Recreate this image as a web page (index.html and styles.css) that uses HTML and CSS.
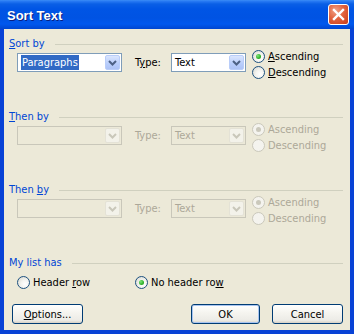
FILE: index.html
```html
<!DOCTYPE html>
<html lang="en">
<head>
  <meta charset="UTF-8" />
  <title>Sort Text</title>
  <link rel="stylesheet" href="styles.css">
</head>
<body>
  <div class="window">
    <div class="titlebar">
      <span class="title">Sort Text</span>
      <div class="close">
        <svg width="13" height="13" viewBox="0 0 13 13"><path d="M2 2 L11 11 M11 2 L2 11" stroke="#fff" stroke-width="2.4" stroke-linecap="square" fill="none"/></svg>
      </div>
    </div>

    <div class="content">
      <div class="group">
        <div class="group-head"><span class="group-label"><u>S</u>ort by</span><span class="rule"></span></div>
        <div class="row">
          <div class="select select-main">
            <span class="value"><span class="selected">Paragraphs</span></span>
            <span class="arrow"><svg width="9" height="6" viewBox="0 0 9 6"><path d="M1 1 L4.5 4.5 L8 1" stroke="currentColor" stroke-width="2" fill="none"/></svg></span>
          </div>
          <span class="type-label">T<u>y</u>pe:</span>
          <div class="select select-type">
            <span class="value">Text</span>
            <span class="arrow"><svg width="9" height="6" viewBox="0 0 9 6"><path d="M1 1 L4.5 4.5 L8 1" stroke="currentColor" stroke-width="2" fill="none"/></svg></span>
          </div>
          <div class="radios">
            <div class="option"><span class="radio"><span class="dot"></span></span><span><u>A</u>scending</span></div>
            <div class="option"><span class="radio"></span><span><u>D</u>escending</span></div>
          </div>
        </div>
      </div>

      <div class="group disabled">
        <div class="group-head"><span class="group-label"><u>T</u>hen by</span><span class="rule"></span></div>
        <div class="row">
          <div class="select select-main">
            <span class="value"></span>
            <span class="arrow"><svg width="9" height="6" viewBox="0 0 9 6"><path d="M1 1 L4.5 4.5 L8 1" stroke="currentColor" stroke-width="2" fill="none"/></svg></span>
          </div>
          <span class="type-label">Type:</span>
          <div class="select select-type">
            <span class="value">Text</span>
            <span class="arrow"><svg width="9" height="6" viewBox="0 0 9 6"><path d="M1 1 L4.5 4.5 L8 1" stroke="currentColor" stroke-width="2" fill="none"/></svg></span>
          </div>
          <div class="radios">
            <div class="option"><span class="radio"><span class="dot"></span></span><span>Ascending</span></div>
            <div class="option"><span class="radio"></span><span>Descending</span></div>
          </div>
        </div>
      </div>

      <div class="group disabled">
        <div class="group-head"><span class="group-label">Then <u>b</u>y</span><span class="rule"></span></div>
        <div class="row">
          <div class="select select-main">
            <span class="value"></span>
            <span class="arrow"><svg width="9" height="6" viewBox="0 0 9 6"><path d="M1 1 L4.5 4.5 L8 1" stroke="currentColor" stroke-width="2" fill="none"/></svg></span>
          </div>
          <span class="type-label">Type:</span>
          <div class="select select-type">
            <span class="value">Text</span>
            <span class="arrow"><svg width="9" height="6" viewBox="0 0 9 6"><path d="M1 1 L4.5 4.5 L8 1" stroke="currentColor" stroke-width="2" fill="none"/></svg></span>
          </div>
          <div class="radios">
            <div class="option"><span class="radio"><span class="dot"></span></span><span>Ascending</span></div>
            <div class="option"><span class="radio"></span><span>Descending</span></div>
          </div>
        </div>
      </div>

      <div class="list-group">
        <div class="group-head"><span class="group-label">My list has</span><span class="rule"></span></div>
        <div class="list-row">
          <div class="option header-opt"><span class="radio"></span><span>Header <u>r</u>ow</span></div>
          <div class="option"><span class="radio"><span class="dot"></span></span><span>No header ro<u>w</u></span></div>
        </div>
      </div>

      <div class="buttons">
        <button class="btn"><u>O</u>ptions...</button>
        <span class="spacer"></span>
        <button class="btn btn-ok">OK</button>
        <button class="btn btn-cancel">Cancel</button>
      </div>
    </div>
  </div>
</body>
</html>
```

FILE: styles.css
```css
* { box-sizing: border-box; }
body {
  margin: 0;
  width: 354px;
  height: 334px;
  overflow: hidden;
  font-family: "DejaVu Sans Condensed", "Liberation Sans", sans-serif;
  font-size: 11px;
  color: #000;
}
u { text-decoration-thickness: 1px; text-underline-offset: 1px; }
.window {
  width: 354px;
  height: 334px;
  display: flex;
  flex-direction: column;
  background: #0842d6;
}
.titlebar {
  height: 29px;
  flex: none;
  display: flex;
  align-items: center;
  padding: 2px 5px 0 7px;
  background: linear-gradient(to bottom, #3d8ff6 0, #2a7cf4 1px, #0a5fe6 4px, #0055e5 9px, #0053e3 18px, #0058ee 24px, #0046d0 29px);
}
.title {
  font-family: "Liberation Sans", sans-serif;
  font-weight: bold;
  font-size: 13px;
  color: #fff;
  text-shadow: 1px 1px 0 #0a1e80;
}
.close {
  margin-left: auto;
  width: 21px;
  height: 21px;
  border: 1px solid #fff;
  border-radius: 3px;
  background: radial-gradient(circle at 35% 30%, #f0a287 0, #e2643f 45%, #c83b17 100%);
  display: grid;
  place-items: center;
  margin-top: -2px;
}
.content {
  flex: 1;
  margin: 0 4px 4px 4px;
  background: #ece9d8;
  padding: 9px 7px 0 5px;
}
.group { margin-bottom: 31px; }
.group-head {
  display: flex;
  align-items: center;
  height: 12px;
  line-height: 12px;
}
.group-label { color: #0046d5; }
.rule {
  flex: 1;
  margin-left: 10px;
  border-top: 1px solid #d0d0bf;
}
.row {
  display: flex;
  align-items: flex-start;
}
.select {
  margin-top: 3px;
  height: 19px;
  border: 1px solid #7f9db9;
  background: #fff;
  display: flex;
  align-items: center;
  padding: 1px;
}
.select-main { width: 105px; margin-left: 8px; }
.select-type { width: 75px; }
.value {
  flex: 1;
  padding-left: 2px;
  line-height: 13px;
}
.selected {
  background: #316ac5;
  color: #fff;
  padding: 1px 1px;
}
.arrow {
  width: 15px;
  height: 15px;
  border-radius: 2px;
  border: 1px solid #b9cdf9;
  background: linear-gradient(to bottom, #dbe6fe, #b8cdfb 60%, #adc3f6);
  color: #4d6185;
  display: grid;
  place-items: center;
}
.type-label {
  width: 36px;
  margin-left: 13px;
  margin-top: 6px;
  line-height: 13px;
}
.radios {
  margin-left: 6px;
  margin-top: -2px;
}
.option {
  display: flex;
  align-items: center;
  gap: 3px;
  height: 16px;
}
.radio {
  width: 13px;
  height: 13px;
  border-radius: 50%;
  border: 1px solid #1c5180;
  background: radial-gradient(circle at 65% 65%, #ffffff 0, #f4f4f0 40%, #d4d4cb 100%);
  display: grid;
  place-items: center;
}
.dot {
  width: 5px;
  height: 5px;
  border-radius: 50%;
  background: radial-gradient(circle at 35% 35%, #7ee57a 0, #2eb12a 60%, #1e8a1b 100%);
}

.disabled .group-label { color: #0046d5; }
.disabled .type-label,
.disabled .option,
.disabled .value { color: #aca899; }
.disabled .select {
  border-color: #c9c7ba;
  background: #ece9d8;
}
.disabled .arrow {
  border-color: #e4e2d6;
  background: #f3f2ea;
  color: #c9c7ba;
}
.disabled .radio {
  border-color: #cac8bb;
  background: #f4f3ee;
}
.disabled .dot { background: #cac8bb; }

.list-group .group-head { margin-bottom: 5px; }
.list-row { display: flex; }
.header-opt { width: 118px; margin-left: 8px; }

.buttons {
  display: flex;
  margin: 14px 0 0 3px;
}
.spacer { flex: 1; }
.btn {
  height: 20px;
  width: 71px;
  font: inherit;
  color: #000;
  border: 1px solid #003c74;
  border-radius: 3px;
  background: linear-gradient(to bottom, #ffffff 0, #f6f5f0 40%, #ecebe6 85%, #d6d0c5 100%);
  padding: 0;
}
.btn-ok {
  width: 69px;
  box-shadow: inset 0 0 0 1px #a8c4f0;
}
.btn-cancel { margin-left: 12px; }
```
